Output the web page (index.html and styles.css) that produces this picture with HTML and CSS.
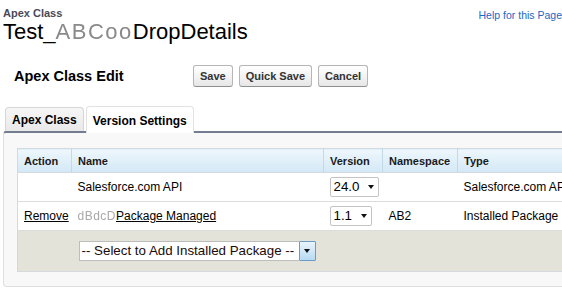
FILE: index.html
```html
<!DOCTYPE html>
<html>
<head>
<meta charset="utf-8">
<title>Apex Class Edit</title>
<link rel="stylesheet" href="styles.css">
</head>
<body>
<div class="page">
  <div class="header">
    <div class="titles">
      <div class="page-type">Apex Class</div>
      <h1 class="page-name">Test_<span class="blur-big">ABCoo</span>DropDetails</h1>
    </div>
    <a class="help" href="#">Help for this Page</a>
  </div>

  <div class="editbar">
    <h2 class="edit-title">Apex Class Edit</h2>
    <div class="buttons">
      <button class="btn" type="button">Save</button>
      <button class="btn" type="button">Quick Save</button>
      <button class="btn" type="button">Cancel</button>
    </div>
  </div>

  <div class="tabs">
    <div class="tab">Apex Class</div>
    <div class="tab active">Version Settings</div>
  </div>

  <div class="panel">
    <table class="grid">
      <colgroup>
        <col class="w-action">
        <col class="w-name">
        <col class="w-ver">
        <col class="w-ns">
        <col class="w-type">
      </colgroup>
      <thead>
        <tr>
          <th>Action</th>
          <th>Name</th>
          <th>Version</th>
          <th>Namespace</th>
          <th>Type</th>
        </tr>
      </thead>
      <tbody>
        <tr>
          <td></td>
          <td>Salesforce.com API</td>
          <td><span class="sel">24.0<i class="caret"></i></span></td>
          <td></td>
          <td>Salesforce.com API</td>
        </tr>
        <tr>
          <td><a class="link" href="#">Remove</a></td>
          <td><span class="blur-small">dBdcD</span><a class="link" href="#">Package Managed</a></td>
          <td><span class="sel">1.1<i class="caret"></i></span></td>
          <td>AB2</td>
          <td>Installed Package</td>
        </tr>
        <tr class="foot">
          <td></td>
          <td colspan="4" class="foot-cell">
            <span class="dd"><span class="dd-text">-- Select to Add Installed Package --</span><span class="dd-btn"><i class="caret"></i></span></span>
          </td>
        </tr>
      </tbody>
    </table>
  </div>
</div>
</body>
</html>
```

FILE: styles.css
```css
html, body {
  margin: 0;
  padding: 0;
  overflow: hidden;
  background: #ffffff;
}

body {
  font-family: "Liberation Sans", Arial, sans-serif;
  color: #000;
}

.page {
  width: 700px;
}

/* ---------- header ---------- */
.header {
  width: 562px;
  box-sizing: border-box;
  padding-left: 3px;
  display: flex;
  justify-content: space-between;
  align-items: flex-start;
}

.page-type {
  padding-top: 7px;
  font-size: 11px;
  line-height: 13px;
  font-weight: bold;
  color: #4a4a56;
}

.page-name {
  margin: 0;
  font-size: 22px;
  line-height: 24px;
  font-weight: normal;
  color: #000;
}

.blur-big {
  color: #8a8a8a;
  letter-spacing: 1.5px;
  filter: blur(0.6px);
}

.help {
  margin-top: 9px;
  font-size: 10.5px;
  line-height: 12px;
  color: #1e66c4;
  text-decoration: none;
  white-space: nowrap;
}

/* ---------- edit bar ---------- */
.editbar {
  margin-top: 21px;
  height: 22px;
  display: flex;
  align-items: center;
}

.edit-title {
  margin: 0 0 0 14px;
  flex: 0 0 179px;
  font-size: 14.5px;
  font-weight: bold;
  line-height: 18px;
}

.buttons {
  display: flex;
  gap: 6px;
}

.btn {
  height: 22px;
  box-sizing: border-box;
  padding: 0 6px;
  margin: 0;
  font-family: "Liberation Sans", Arial, sans-serif;
  font-size: 11px;
  font-weight: bold;
  color: #333;
  border: 1px solid #b5b5b5;
  border-bottom-color: #8f8f8f;
  border-radius: 3px;
  background: linear-gradient(to bottom, #ffffff 0%, #f4f4f4 50%, #e6e6e6 100%);
}

/* ---------- tabs ---------- */
.tabs {
  margin-top: 19px;
  padding-left: 5px;
  display: flex;
  align-items: flex-end;
  gap: 2px;
}

.tab {
  padding: 5px 6px 4px;
  font-size: 12px;
  line-height: 14px;
  font-weight: bold;
  color: #000;
  border: 1px solid #d6d6d6;
  border-bottom: none;
  border-radius: 4px 4px 0 0;
  background: linear-gradient(to bottom, #f6f6f6, #e9e9e9);
}

.tab.active {
  padding: 7px 6px 5px;
  margin-bottom: -2px;
  background: #ffffff;
  border-color: #e2e2e2;
  position: relative;
  z-index: 1;
}

/* ---------- panel ---------- */
.panel {
  margin-left: 3px;
  padding: 15px 0 14px 13px;
  background: #f8f8f8;
  border-top: 2px solid #737d8f;
  border-left: 1px solid #dedede;
  border-bottom: 1px solid #dedede;
  border-radius: 3px 0 0 4px;
}

.grid {
  border-collapse: collapse;
  table-layout: fixed;
  width: 680px;
  border: 1px solid #d3d9dc;
  font-size: 12px;
}

.w-action { width: 54px; }
.w-name { width: 252px; }
.w-ver { width: 59px; }
.w-ns { width: 75px; }
.w-type { width: 240px; }

.grid th {
  padding: 6px 6px 4px;
  font-size: 11px;
  line-height: 13px;
  font-weight: bold;
  text-align: left;
  color: #1a1a1a;
  background: linear-gradient(to bottom, #eef7fc, #d3e8f6);
  border-left: 1px solid #c4d9e6;
  border-bottom: 1px solid #d3d9dc;
  white-space: nowrap;
}

.grid th:first-child {
  border-left-color: #d3d9dc;
}

.grid td {
  height: 28px;
  padding: 0 6px;
  line-height: 14px;
  vertical-align: middle;
  background: #ffffff;
  border-bottom: 1px solid #dcdcdc;
  white-space: nowrap;
}

.link {
  color: #000;
  text-decoration: underline;
}

.blur-small {
  color: #a8a8a8;
  letter-spacing: 0.5px;
  filter: blur(0.6px);
}

/* small version selects */
.sel {
  display: inline-flex;
  align-items: center;
  height: 20px;
  box-sizing: border-box;
  padding: 0 4px 0 3px;
  font-size: 13.33px;
  line-height: 16px;
  color: #000;
  background: #fff;
  border: 1px solid #c4c4c4;
  border-radius: 2px;
}

.sel .caret {
  margin-left: 9px;
}

.caret {
  display: inline-block;
  width: 0;
  height: 0;
  border-left: 3.5px solid transparent;
  border-right: 3.5px solid transparent;
  border-top: 4px solid #111;
}

/* footer row */
.grid tr.foot td {
  height: 40px;
  background: #e3e3da;
  border-bottom: none;
}

.grid td.foot-cell {
  padding-left: 7px;
}

.dd {
  display: inline-flex;
  height: 20px;
  vertical-align: middle;
}

.dd-text {
  display: flex;
  align-items: center;
  width: 220px;
  padding-left: 2px;
  box-sizing: border-box;
  background: #fff;
  border: 1px solid #bdbdbd;
  border-right: none;
  font-size: 13.33px;
  line-height: 16px;
  color: #1a0a0a;
}

.dd-btn {
  display: flex;
  align-items: center;
  justify-content: center;
  width: 17px;
  box-sizing: border-box;
  border: 1px solid #6b9bc7;
  border-radius: 1px;
  background: linear-gradient(to bottom, #e9f4fc, #b7daf3);
}
```
